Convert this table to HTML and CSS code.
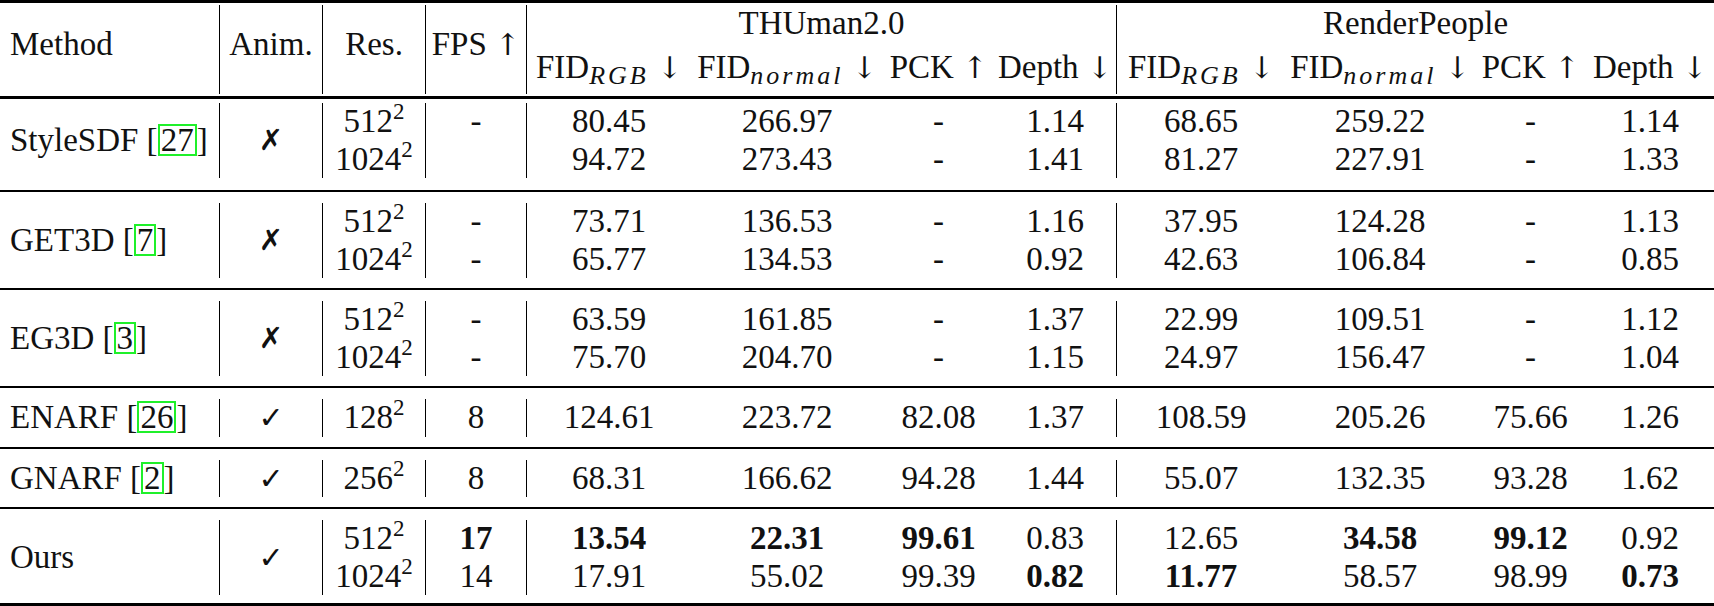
FILE: index.html
```html
<!DOCTYPE html>
<html lang="en">
<head>
  <meta charset="UTF-8">
  <title>Results Table</title>
  <link rel="stylesheet" href="styles.css">
</head>
<body>
  <table class="results">
    <colgroup>
      <col class="w-method"><col class="w-anim"><col class="w-res"><col class="w-fps">
      <col class="w-t1"><col class="w-t2"><col class="w-t3"><col class="w-t4">
      <col class="w-r1"><col class="w-r2"><col class="w-r3"><col class="w-r4">
    </colgroup>

    <tr class="rule top"><td colspan="12"><div class="line thick"></div></td></tr>

    <!-- header -->
    <tr class="head-a">
      <th rowspan="2" class="method vl lift">Method</th>
      <th rowspan="2" class="vl lift">Anim.</th>
      <th rowspan="2" class="vl lift">Res.</th>
      <th rowspan="2" class="vl lift">FPS <span class="arr">&uarr;</span></th>
      <th colspan="4" class="vl">THUman2.0</th>
      <th colspan="4">RenderPeople</th>
    </tr>
    <tr class="head-b">
      <th>FID<sub>RGB</sub> <span class="arr">&darr;</span></th>
      <th>FID<sub>normal</sub> <span class="arr">&darr;</span></th>
      <th>PCK <span class="arr">&uarr;</span></th>
      <th class="vl">Depth <span class="arr">&darr;</span></th>
      <th>FID<sub>RGB</sub> <span class="arr">&darr;</span></th>
      <th>FID<sub>normal</sub> <span class="arr">&darr;</span></th>
      <th>PCK <span class="arr">&uarr;</span></th>
      <th>Depth <span class="arr">&darr;</span></th>
    </tr>

    <tr class="rule mid"><td colspan="12"><div class="line thick"></div></td></tr>

    <!-- StyleSDF -->
    <tr>
      <td rowspan="2" class="method vl">StyleSDF [<span class="cite">27</span>]</td>
      <td rowspan="2" class="vl mark">&#10007;</td>
      <td class="vl">512<sup>2</sup></td>
      <td class="vl">-</td>
      <td>80.45</td><td>266.97</td><td>-</td><td class="vl">1.14</td>
      <td>68.65</td><td>259.22</td><td>-</td><td>1.14</td>
    </tr>
    <tr>
      <td class="vl">1024<sup>2</sup></td>
      <td class="vl"></td>
      <td>94.72</td><td>273.43</td><td>-</td><td class="vl">1.41</td>
      <td>81.27</td><td>227.91</td><td>-</td><td>1.33</td>
    </tr>

    <tr class="rule"><td colspan="12"><div class="line"></div></td></tr>

    <!-- GET3D -->
    <tr>
      <td rowspan="2" class="method vl">GET3D [<span class="cite">7</span>]</td>
      <td rowspan="2" class="vl mark">&#10007;</td>
      <td class="vl">512<sup>2</sup></td>
      <td class="vl">-</td>
      <td>73.71</td><td>136.53</td><td>-</td><td class="vl">1.16</td>
      <td>37.95</td><td>124.28</td><td>-</td><td>1.13</td>
    </tr>
    <tr>
      <td class="vl">1024<sup>2</sup></td>
      <td class="vl">-</td>
      <td>65.77</td><td>134.53</td><td>-</td><td class="vl">0.92</td>
      <td>42.63</td><td>106.84</td><td>-</td><td>0.85</td>
    </tr>

    <tr class="rule"><td colspan="12"><div class="line"></div></td></tr>

    <!-- EG3D -->
    <tr>
      <td rowspan="2" class="method vl">EG3D [<span class="cite">3</span>]</td>
      <td rowspan="2" class="vl mark">&#10007;</td>
      <td class="vl">512<sup>2</sup></td>
      <td class="vl">-</td>
      <td>63.59</td><td>161.85</td><td>-</td><td class="vl">1.37</td>
      <td>22.99</td><td>109.51</td><td>-</td><td>1.12</td>
    </tr>
    <tr>
      <td class="vl">1024<sup>2</sup></td>
      <td class="vl">-</td>
      <td>75.70</td><td>204.70</td><td>-</td><td class="vl">1.15</td>
      <td>24.97</td><td>156.47</td><td>-</td><td>1.04</td>
    </tr>

    <tr class="rule"><td colspan="12"><div class="line"></div></td></tr>

    <!-- ENARF -->
    <tr>
      <td class="method vl">ENARF [<span class="cite">26</span>]</td>
      <td class="vl mark check">&#10003;</td>
      <td class="vl">128<sup>2</sup></td>
      <td class="vl">8</td>
      <td>124.61</td><td>223.72</td><td>82.08</td><td class="vl">1.37</td>
      <td>108.59</td><td>205.26</td><td>75.66</td><td>1.26</td>
    </tr>

    <tr class="rule"><td colspan="12"><div class="line"></div></td></tr>

    <!-- GNARF -->
    <tr>
      <td class="method vl">GNARF [<span class="cite">2</span>]</td>
      <td class="vl mark check">&#10003;</td>
      <td class="vl">256<sup>2</sup></td>
      <td class="vl">8</td>
      <td>68.31</td><td>166.62</td><td>94.28</td><td class="vl">1.44</td>
      <td>55.07</td><td>132.35</td><td>93.28</td><td>1.62</td>
    </tr>

    <tr class="rule"><td colspan="12"><div class="line"></div></td></tr>

    <!-- Ours -->
    <tr>
      <td rowspan="2" class="method vl">Ours</td>
      <td rowspan="2" class="vl mark check">&#10003;</td>
      <td class="vl">512<sup>2</sup></td>
      <td class="vl b">17</td>
      <td class="b">13.54</td><td class="b">22.31</td><td class="b">99.61</td><td class="vl">0.83</td>
      <td>12.65</td><td class="b">34.58</td><td class="b">99.12</td><td>0.92</td>
    </tr>
    <tr>
      <td class="vl">1024<sup>2</sup></td>
      <td class="vl">14</td>
      <td>17.91</td><td>55.02</td><td>99.39</td><td class="vl b">0.82</td>
      <td class="b">11.77</td><td>58.57</td><td>98.99</td><td class="b">0.73</td>
    </tr>

    <tr class="rule bottom"><td colspan="12"><div class="line thick"></div></td></tr>
  </table>
</body>
</html>
```

FILE: styles.css
```css
* {
  box-sizing: border-box;
  margin: 0;
  padding: 0;
}

body {
  background: #fff;
  color: #111;
  font-family: "Liberation Serif", "Times New Roman", serif;
  font-size: 33px;
}

.results {
  width: 1714px;
  table-layout: fixed;
  border-collapse: separate;
  border-spacing: 0;
  font-family: "Liberation Serif", "Times New Roman", serif;
}

/* column widths */
.w-method { width: 220px; }
.w-anim { width: 103px; }
.w-res { width: 103px; }
.w-fps { width: 101px; }
.w-t1 { width: 164px; }
.w-t2 { width: 192px; }
.w-t3 { width: 111px; }
.w-t4 { width: 123px; }
.w-r1 { width: 168px; }
.w-r2 { width: 190px; }
.w-r3 { width: 111px; }
.w-r4 { width: 128px; }

th, td {
  font-weight: normal;
  text-align: center;
  vertical-align: middle;
  white-space: nowrap;
  padding: 0;
  height: 37.5px;
  line-height: 37.5px;
}

.method {
  text-align: left;
  padding-left: 10px;
}

.vl {
  border-right: 1px solid #000;
}

.b {
  font-weight: bold;
}

/* header */
.head-a th {
  height: 36px;
  line-height: 36px;
}

.head-b th {
  height: 52px;
  line-height: 52px;
}

.head-a th.lift {
  padding-bottom: 11px;
}

.arr {
  font-family: "DejaVu Serif", serif;
  font-size: 30px;
}

sub {
  font-style: italic;
  font-size: 26px;
  letter-spacing: 3px;
  vertical-align: -6px;
  line-height: 0;
}

sup {
  font-size: 23px;
  vertical-align: 13px;
  line-height: 0;
}

/* citation link box */
.cite {
  display: inline-block;
  line-height: 28px;
  padding: 0 1px;
  border: 2px solid #1ff02a;
}

/* check / cross marks */
.mark {
  font-family: "DejaVu Sans", sans-serif;
  font-size: 29px;
  font-weight: bold;
}

.mark.check {
  font-weight: normal;
  font-size: 30px;
}

/* horizontal rules */
.rule td {
  height: auto;
  line-height: 0;
  padding: 10px 0 11px;
}

.rule .line {
  border-top: 2px solid #000;
}

.rule .line.thick {
  border-top-width: 3px;
}

.rule.top td {
  padding: 0 0 2px;
}

.rule.mid td {
  padding: 2px 0 4px;
}

.rule.mid + tr + tr + .rule td {
  padding-top: 12px;
}

.rule.bottom td {
  padding: 8px 0 0;
}
```
